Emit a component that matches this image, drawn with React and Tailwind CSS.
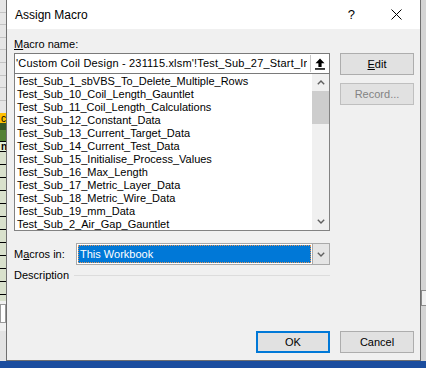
import React from 'react';

const macros = [
  'Test_Sub_1_sbVBS_To_Delete_Multiple_Rows',
  'Test_Sub_10_Coil_Length_Gauntlet',
  'Test_Sub_11_Coil_Length_Calculations',
  'Test_Sub_12_Constant_Data',
  'Test_Sub_13_Current_Target_Data',
  'Test_Sub_14_Current_Test_Data',
  'Test_Sub_15_Initialise_Process_Values',
  'Test_Sub_16_Max_Length',
  'Test_Sub_17_Metric_Layer_Data',
  'Test_Sub_18_Metric_Wire_Data',
  'Test_Sub_19_mm_Data',
  'Test_Sub_2_Air_Gap_Gauntlet',
];

function Chevron({ up = false }) {
  return (
    <svg width="8" height="5" viewBox="0 0 8 5" className="block">
      <path
        d={up ? 'M0.8 4.3 L4 1.1 L7.2 4.3' : 'M0.8 0.7 L4 3.9 L7.2 0.7'}
        fill="none"
        stroke="#606060"
        strokeWidth="1.4"
      />
    </svg>
  );
}

function SheetStrip() {
  return (
    <div className="w-[6px] flex flex-col bg-[#e6e6e6] overflow-hidden text-[10px] font-bold leading-none">
      {[...Array(8)].map((_, i) => (
        <div key={i} className="h-[12.6px] shrink-0 border-b border-[#c4c4c4]" />
      ))}
      <div className="h-[12px] shrink-0 bg-[#e6e6e6]" />
      <div className="h-[10px] shrink-0 bg-[#ffc000] pl-[1px] pt-[1px] font-normal">ct</div>
      <div className="h-[7px] shrink-0 bg-[#375623]" />
      <div className="h-[11px] shrink-0 bg-[#548235]" />
      <div className="h-[11px] shrink-0 bg-[#e2efda] border-y border-black pl-[1px]">n</div>
      {[...Array(11)].map((_, i) => (
        <div key={i} className="h-[13px] shrink-0 bg-[#d9e1cc] border-b border-black" />
      ))}
      <div className="h-[6px] shrink-0 bg-[#d9e1cc]" />
      <div className="h-[30px] shrink-0 bg-[#f0f0f0] pt-[3px]">
        <div className="h-[19px] bg-white border border-[#9a9a9a]" />
      </div>
      <div className="flex-1 bg-[#e3e3e3]" />
    </div>
  );
}

function Button({ children, primary = false, disabled = false }) {
  return (
    <div
      className={`h-[22px] w-[74px] flex items-center justify-center bg-[#e1e1e1] text-[11px] ${
        primary
          ? 'border-2 border-[#0078d7]'
          : disabled
          ? 'border border-[#bfbfbf] text-[#838383]'
          : 'border border-[#adadad]'
      }`}
    >
      {children}
    </div>
  );
}

export default function App() {
  return (
    <div className="w-[426px] h-[368px] flex flex-col overflow-hidden font-['Liberation_Sans',Arial,sans-serif] text-black">
      <div className="h-[361px] flex">
        <SheetStrip />

        {/* dialog */}
        <div className="w-[415px] flex flex-col border-x border-b border-[#6f6f6f] bg-[#f0f0f0]">
          <div className="h-[29px] shrink-0 bg-white flex items-center pl-[8px]">
            <span className="text-[12px]">Assign Macro</span>
            <span className="ml-auto text-[13px] mr-[36px]">?</span>
            <svg width="11" height="11" viewBox="0 0 11 11" className="mr-[18px]">
              <path d="M0.5 0.5 L10.5 10.5 M10.5 0.5 L0.5 10.5" stroke="#000" strokeWidth="1" />
            </svg>
          </div>

          <div className="flex-1 flex flex-col pl-[7px] pr-[6px] pb-[7px] text-[11px]">
            <div className="flex gap-[10px]">
              {/* left column */}
              <div className="w-[316px] flex flex-col">
                <div className="h-[15px] mt-[8px] mb-[1px] leading-[15px]">
                  <span className="underline underline-offset-1">M</span>acro name:
                </div>
                <div className="h-[21px] bg-white border border-[#7a7a7a] flex items-center">
                  <div className="flex-1 overflow-hidden whitespace-nowrap pl-[1px] text-[11px] tracking-[0.18px]">
                    'Custom Coil Design - 231115.xlsm'!Test_Sub_27_Start_Initialise
                  </div>
                  <div className="w-[18px] h-[17px] mr-[1px] ml-[3px] flex items-center justify-center bg-white border-l border-[#c8c8c8]">
                    <svg width="10" height="12" viewBox="0 0 10 12">
                      <path d="M5 0.5 L9.5 5.2 H6.6 V9 H3.4 V5.2 H0.5 Z" fill="#000" />
                      <rect x="0" y="10.2" width="10" height="1.5" fill="#000" />
                    </svg>
                  </div>
                </div>
                <div className="h-[157px] bg-white border-x border-b border-[#828282] flex">
                  <div className="flex-1 pt-[1px] pl-[2px] overflow-hidden whitespace-nowrap">
                    {macros.map((m) => (
                      <div key={m} className="h-[13px] leading-[13px]">
                        {m}
                      </div>
                    ))}
                  </div>
                  <div className="w-[17px] bg-[#f0f0f0] flex flex-col items-center">
                    <div className="h-[17px] flex items-center justify-center">
                      <Chevron up />
                    </div>
                    <div className="w-full h-[33px] bg-[#cdcdcd]" />
                    <div className="mt-auto h-[17px] flex items-center justify-center">
                      <Chevron />
                    </div>
                  </div>
                </div>

                <div className="mt-[12px] h-[22px] flex items-center">
                  <span className="w-[62px]">
                    M<span className="underline underline-offset-1">a</span>cros in:
                  </span>
                  <div className="flex-1 h-[22px] bg-white border border-[#a9a9a9] flex">
                    <div className="flex-1 m-[1px] bg-[#0078d7] border border-dotted border-[#e0955a] text-white flex items-center pl-[1px]">
                      This Workbook
                    </div>
                    <div className="w-[17px] bg-[#e5e5e5] border-l border-[#a9a9a9] flex items-center justify-center">
                      <Chevron />
                    </div>
                  </div>
                </div>

                <div className="mt-[3px] h-[15px] flex items-center gap-[5px]">
                  <span>Description</span>
                  <div className="flex-1 h-px bg-[#dcdcdc]" />
                </div>
              </div>

              {/* right column */}
              <div className="flex flex-col gap-[8px] pt-[24px]">
                <Button>
                  <span>
                    <span className="underline underline-offset-1">E</span>dit
                  </span>
                </Button>
                <Button disabled>Record...</Button>
              </div>
            </div>

            <div className="mt-auto flex justify-end gap-[10px]">
              <Button primary>OK</Button>
              <Button>Cancel</Button>
            </div>
          </div>
        </div>

        {/* right of dialog */}
        <div className="w-[5px] bg-[#d4d4d4] flex flex-col">
          <div className="mt-[290px] h-[16px] border-y border-l border-[#8a8a8a] bg-[#f0f0f0]" />
        </div>
      </div>
      <div className="flex-1 bg-[#1b4d9e]" />
    </div>
  );
}
